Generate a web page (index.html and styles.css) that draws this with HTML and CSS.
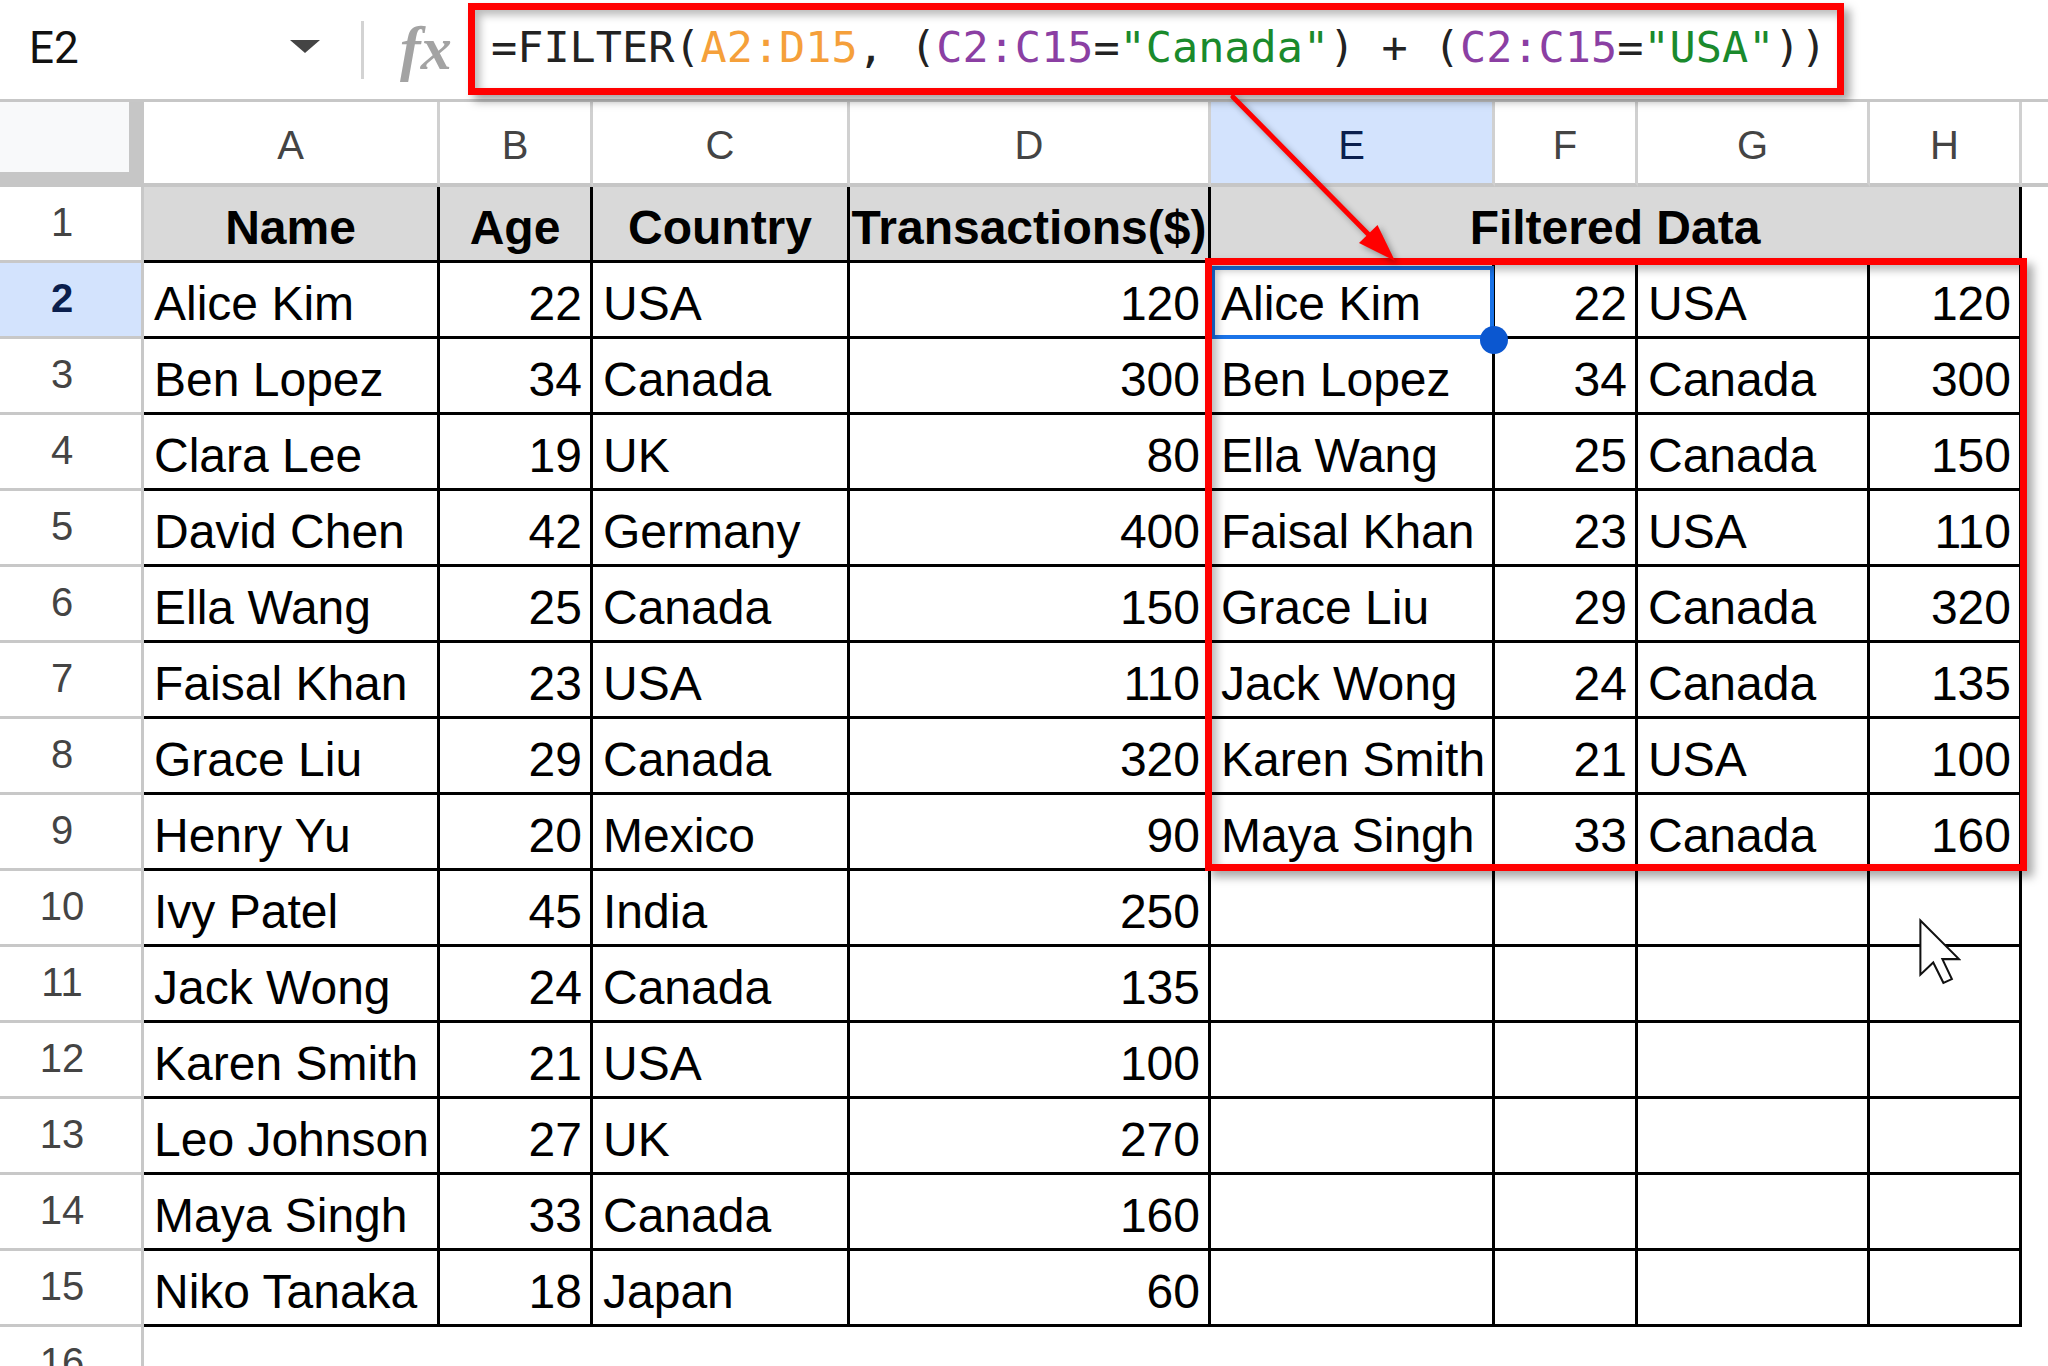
FILE: index.html
```html
<!DOCTYPE html>
<html lang="en">
<head>
<meta charset="utf-8">
<title>FILTER example</title>
<link rel="stylesheet" href="styles.css">
</head>
<body>
<div class="formula-bar">
  <div class="name-box"><span class="cell-ref">E2</span><span class="caret"></span></div>
  <div class="divider"></div>
  <div class="fx">fx</div>
  <div class="formula">=FILTER(<span class="f-or">A2:D15</span>, (<span class="f-pu">C2:C15</span>=<span class="f-gr">"Canada"</span>) + (<span class="f-pu">C2:C15</span>=<span class="f-gr">"USA"</span>))</div>
</div>

<div class="sheet">
  <div class="corner"></div>
  <div class="col-h">A</div><div class="col-h">B</div><div class="col-h">C</div><div class="col-h">D</div>
  <div class="col-h sel">E</div><div class="col-h">F</div><div class="col-h">G</div><div class="col-h">H</div><div class="col-h last"></div>

  <div class="row-h">1</div>
  <div class="c hd">Name</div><div class="c hd">Age</div><div class="c hd">Country</div><div class="c hd">Transactions($)</div>
  <div class="c hd merge">Filtered Data</div><div></div>

  <div class="row-h sel">2</div>
  <div class="c">Alice Kim</div><div class="c num">22</div><div class="c">USA</div><div class="c num">120</div>
  <div class="c active">Alice Kim</div><div class="c num">22</div><div class="c">USA</div><div class="c num">120</div><div></div>

  <div class="row-h">3</div>
  <div class="c">Ben Lopez</div><div class="c num">34</div><div class="c">Canada</div><div class="c num">300</div>
  <div class="c">Ben Lopez</div><div class="c num">34</div><div class="c">Canada</div><div class="c num">300</div><div></div>

  <div class="row-h">4</div>
  <div class="c">Clara Lee</div><div class="c num">19</div><div class="c">UK</div><div class="c num">80</div>
  <div class="c">Ella Wang</div><div class="c num">25</div><div class="c">Canada</div><div class="c num">150</div><div></div>

  <div class="row-h">5</div>
  <div class="c">David Chen</div><div class="c num">42</div><div class="c">Germany</div><div class="c num">400</div>
  <div class="c">Faisal Khan</div><div class="c num">23</div><div class="c">USA</div><div class="c num">110</div><div></div>

  <div class="row-h">6</div>
  <div class="c">Ella Wang</div><div class="c num">25</div><div class="c">Canada</div><div class="c num">150</div>
  <div class="c">Grace Liu</div><div class="c num">29</div><div class="c">Canada</div><div class="c num">320</div><div></div>

  <div class="row-h">7</div>
  <div class="c">Faisal Khan</div><div class="c num">23</div><div class="c">USA</div><div class="c num">110</div>
  <div class="c">Jack Wong</div><div class="c num">24</div><div class="c">Canada</div><div class="c num">135</div><div></div>

  <div class="row-h">8</div>
  <div class="c">Grace Liu</div><div class="c num">29</div><div class="c">Canada</div><div class="c num">320</div>
  <div class="c">Karen Smith</div><div class="c num">21</div><div class="c">USA</div><div class="c num">100</div><div></div>

  <div class="row-h">9</div>
  <div class="c">Henry Yu</div><div class="c num">20</div><div class="c">Mexico</div><div class="c num">90</div>
  <div class="c">Maya Singh</div><div class="c num">33</div><div class="c">Canada</div><div class="c num">160</div><div></div>

  <div class="row-h">10</div>
  <div class="c">Ivy Patel</div><div class="c num">45</div><div class="c">India</div><div class="c num">250</div>
  <div class="c"></div><div class="c"></div><div class="c"></div><div class="c"></div><div></div>

  <div class="row-h">11</div>
  <div class="c">Jack Wong</div><div class="c num">24</div><div class="c">Canada</div><div class="c num">135</div>
  <div class="c"></div><div class="c"></div><div class="c"></div><div class="c"></div><div></div>

  <div class="row-h">12</div>
  <div class="c">Karen Smith</div><div class="c num">21</div><div class="c">USA</div><div class="c num">100</div>
  <div class="c"></div><div class="c"></div><div class="c"></div><div class="c"></div><div></div>

  <div class="row-h">13</div>
  <div class="c">Leo Johnson</div><div class="c num">27</div><div class="c">UK</div><div class="c num">270</div>
  <div class="c"></div><div class="c"></div><div class="c"></div><div class="c"></div><div></div>

  <div class="row-h">14</div>
  <div class="c">Maya Singh</div><div class="c num">33</div><div class="c">Canada</div><div class="c num">160</div>
  <div class="c"></div><div class="c"></div><div class="c"></div><div class="c"></div><div></div>

  <div class="row-h">15</div>
  <div class="c">Niko Tanaka</div><div class="c num">18</div><div class="c">Japan</div><div class="c num">60</div>
  <div class="c"></div><div class="c"></div><div class="c"></div><div class="c"></div><div></div>

  <div class="row-h">16</div>
</div>

<div class="annot annot-formula"></div>
<div class="annot annot-data"></div>

<svg class="arrow" width="200" height="190" viewBox="0 0 200 190">
  <line x1="13" y1="7" x2="152" y2="148" stroke="#ff0000" stroke-width="5" stroke-linecap="round"/>
  <polygon points="175,171 139,153 157.5,135" fill="#ff0000"/>
</svg>

<svg class="cursor" width="44" height="68" viewBox="0 0 13 20">
  <polygon points="1,1 1,17 4.8,13.4 7.8,19.4 10.3,18.3 7.5,12.4 12.4,12.4" fill="#ffffff" stroke="#111111" stroke-width="0.6" stroke-linejoin="miter"/>
</svg>
</body>
</html>
```

FILE: styles.css
```css
* {
  box-sizing: border-box;
}

html, body {
  margin: 0;
  padding: 0;
}

body {
  width: 2048px;
  height: 1366px;
  overflow: hidden;
  position: relative;
  background: #ffffff;
  font-family: "Liberation Sans", Arial, sans-serif;
  color: #000000;
}

/* ---------- formula bar ---------- */
.formula-bar {
  height: 102px;
  border-bottom: 3px solid #c7c7c7;
  display: flex;
  align-items: center;
}

.name-box {
  width: 361px;
  height: 100%;
  display: flex;
  align-items: center;
  justify-content: space-between;
  padding: 0 41px 0 29px;
}

.cell-ref {
  font-family: Roboto, "Liberation Sans", sans-serif;
  font-size: 44px;
  line-height: 1;
  color: #111111;
  margin-bottom: 3px;
}

.caret {
  width: 0;
  height: 0;
  border-left: 15px solid transparent;
  border-right: 15px solid transparent;
  border-top: 13px solid #444444;
  margin-top: -6px;
}

.divider {
  width: 3px;
  height: 58px;
  background: #d3d3d3;
}

.fx {
  width: 51px;
  margin-left: 36px;
  font-family: "Liberation Serif", "Times New Roman", serif;
  font-style: italic;
  font-weight: bold;
  font-size: 62px;
  line-height: 1;
  color: #a3a3a3;
  white-space: nowrap;
  margin-bottom: 4px;
}

.formula {
  margin-left: 40px;
  font-family: "DejaVu Sans Mono", "Liberation Mono", monospace;
  font-size: 43.5px;
  line-height: 1;
  white-space: pre;
  color: #222222;
  margin-bottom: 3px;
}

.f-or { color: #f5a03a; }
.f-pu { color: #8b3fa3; }
.f-gr { color: #1a8a2c; }

/* ---------- grid ---------- */
.sheet {
  display: grid;
  grid-template-columns: 144px 296px 153px 257px 361px 284px 143px 232px 152px 1fr;
  grid-template-rows: 85px;
  grid-auto-rows: 76px;
}

.corner {
  background: #f8f9fa;
  border-right: 15px solid #c6c6c6;
  border-bottom: 15px solid #c6c6c6;
}

.col-h {
  display: flex;
  align-items: center;
  justify-content: center;
  border-right: 3px solid #d0d0d0;
  border-bottom: 4px solid #c6c6c6;
  padding-top: 4px;
  font-size: 40px;
  line-height: 1;
  color: #444444;
}

.col-h.sel {
  background: #d3e3fd;
  color: #0b1f4d;
}

.col-h.last {
  border-right: none;
}

.row-h {
  display: flex;
  align-items: center;
  justify-content: center;
  border-right: 3px solid #c8c8c8;
  border-bottom: 3px solid #c8c8c8;
  padding: 0 17px 4px 0;
  font-size: 40px;
  line-height: 1;
  color: #444444;
}

.row-h.sel {
  background: #d3e3fd;
  color: #0b1f4d;
  font-weight: bold;
}

.c {
  display: flex;
  align-items: center;
  border-right: 3px solid #000000;
  border-bottom: 3px solid #000000;
  padding: 8px 8px 0 10px;
  font-size: 48px;
  line-height: 1;
  white-space: nowrap;
  color: #000000;
}

.c.num {
  justify-content: flex-end;
}

.c.hd {
  background: #d9d9d9;
  font-weight: bold;
  justify-content: center;
  padding: 8px 0 0 0;
}

.c.merge {
  grid-column: span 4;
}

.c.active {
  position: relative;
}

.c.active::before {
  content: "";
  position: absolute;
  left: 0;
  top: 3px;
  right: -2px;
  bottom: -3px;
  border: 4px solid #1a73e8;
}

.c.active::after {
  content: "";
  position: absolute;
  left: 269px;
  top: 63px;
  width: 28px;
  height: 28px;
  border-radius: 50%;
  background: #0b57d0;
  z-index: 2;
}

/* ---------- annotations ---------- */
.annot {
  position: absolute;
  border: 7px solid #ff0000;
  box-shadow: 6px 6px 9px rgba(0, 0, 0, 0.35), inset 5px 5px 8px rgba(0, 0, 0, 0.28);
  pointer-events: none;
  z-index: 3;
}

.annot-formula {
  left: 468px;
  top: 3px;
  width: 1376px;
  height: 92px;
}

.annot-data {
  left: 1205px;
  top: 258px;
  width: 822px;
  height: 613px;
}

.arrow {
  position: absolute;
  left: 1220px;
  top: 90px;
  z-index: 4;
  filter: drop-shadow(3px 3px 3px rgba(0, 0, 0, 0.35));
}

.cursor {
  position: absolute;
  left: 1917px;
  top: 917px;
  z-index: 5;
}
```
